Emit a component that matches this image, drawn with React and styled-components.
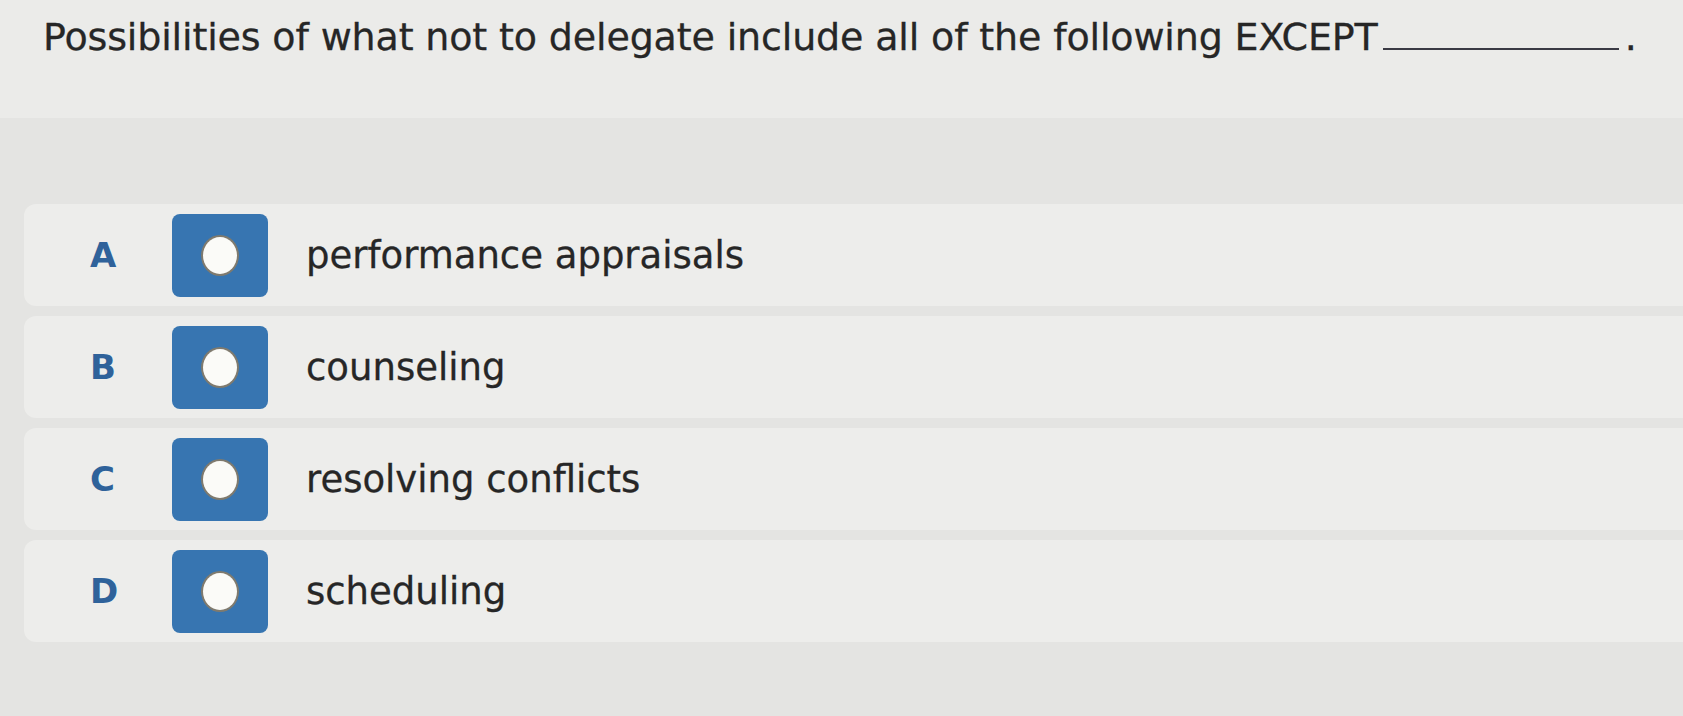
import React from "react";
import styled, { createGlobalStyle } from "styled-components";

const GlobalStyle = createGlobalStyle`
  html, body {
    margin: 0;
    padding: 0;
    background: #e3e3e1;
    font-family: "DejaVu Sans", Verdana, sans-serif;
  }
`;

const Page = styled.div`
  width: 1683px;
  height: 716px;
  overflow: hidden;
  background: #e4e4e2;
`;

const Header = styled.div`
  height: 118px;
  box-sizing: border-box;
  padding: 14px 0 0 43px;
  background: #ebebe9;
`;

const Question = styled.h1`
  margin: 0;
  font-size: 38px;
  line-height: 46px;
  font-weight: normal;
  color: #262626;
  white-space: nowrap;
  letter-spacing: -0.15px;
  -webkit-text-stroke: 0.3px #262626;
`;

const Blank = styled.span`
  display: inline-block;
  width: 236px;
  border-bottom: 2px solid #3a3a44;
  margin: 0 6px 0 5px;
  vertical-align: baseline;
`;

const Options = styled.div`
  display: flex;
  flex-direction: column;
  gap: 10px;
  padding: 86px 0 0 24px;
`;

const Row = styled.div`
  display: flex;
  align-items: center;
  height: 102px;
  background: #ededeb;
  border-radius: 12px 0 0 12px;
`;

const Letter = styled.span`
  width: 148px;
  box-sizing: border-box;
  padding-left: 66px;
  font-size: 34px;
  font-weight: bold;
  color: #2f629a;
`;

const RadioBox = styled.div`
  width: 96px;
  height: 83px;
  border-radius: 8px;
  background: #3775b1;
  display: flex;
  align-items: center;
  justify-content: center;
  margin-right: 38px;
`;

const Dot = styled.span`
  width: 34px;
  height: 37px;
  border-radius: 50%;
  background: #fbfbf8;
  box-shadow: 0 0 0 2px #7f7a6e;
`;

const Label = styled.span`
  font-size: 37px;
  color: #262626;
  -webkit-text-stroke: 0.3px #262626;
`;

const options = [
  { key: "A", text: "performance appraisals" },
  { key: "B", text: "counseling" },
  { key: "C", text: "resolving conflicts" },
  { key: "D", text: "scheduling" },
];

export default function App() {
  return (
    <Page>
      <GlobalStyle />
      <Header>
        <Question>
          Possibilities of what not to delegate include all of the following EXCEPT
          <Blank />.
        </Question>
      </Header>
      <Options>
        {options.map((o) => (
          <Row key={o.key}>
            <Letter>{o.key}</Letter>
            <RadioBox>
              <Dot />
            </RadioBox>
            <Label>{o.text}</Label>
          </Row>
        ))}
      </Options>
    </Page>
  );
}
